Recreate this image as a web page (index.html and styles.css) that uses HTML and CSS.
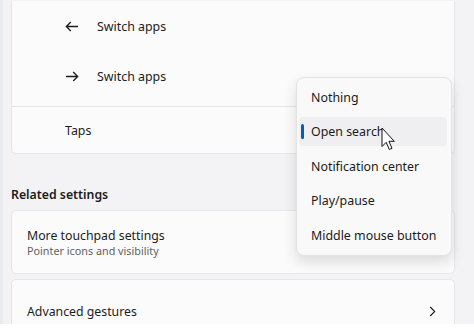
FILE: index.html
```html
<!DOCTYPE html>
<html lang="en">
<head>
    <meta charset="UTF-8">
    <title>Touchpad - Settings</title>
    <link rel="stylesheet" href="styles.css">
</head>
<body>
    <div class="page">
        <div class="card card-top">
            <div class="sub-row">
                <svg class="arrow" width="14" height="11" viewBox="0 0 14 11"><path d="M13 5.5H1.5M5.8 1L1.3 5.5L5.8 10" fill="none" stroke="#1b1b1b" stroke-width="1.3"/></svg>
                <span>Switch apps</span>
            </div>
            <div class="sub-row">
                <svg class="arrow" width="14" height="11" viewBox="0 0 14 11"><path d="M1 5.5H12.5M8.2 1L12.7 5.5L8.2 10" fill="none" stroke="#1b1b1b" stroke-width="1.3"/></svg>
                <span>Switch apps</span>
            </div>
            <div class="taps-row">Taps</div>
        </div>

        <h2 class="section-title">Related settings</h2>

        <div class="card link-card">
            <div class="link-text">
                <div class="link-title">More touchpad settings</div>
                <div class="link-sub">Pointer icons and visibility</div>
            </div>
        </div>

        <div class="card link-card">
            <div class="link-title">Advanced gestures</div>
            <svg class="chevron" width="7" height="11" viewBox="0 0 7 11"><path d="M1.2 1L5.7 5.5L1.2 10" fill="none" stroke="#1b1b1b" stroke-width="1.1"/></svg>
        </div>

        <div class="flyout">
            <div class="option">Nothing</div>
            <div class="option selected">Open search</div>
            <div class="option">Notification center</div>
            <div class="option">Play/pause</div>
            <div class="option">Middle mouse button</div>
        </div>

        <svg class="cursor" width="14" height="24" viewBox="0 0 14 24"><path d="M1 1V19.5L5.2 15.3L8.3 22.5L11 21.3L7.9 14.3H13.3Z" fill="#fff" stroke="#111" stroke-width="1" stroke-linejoin="round"/></svg>
    </div>
    <div class="bottom-strip"></div>
</body>
</html>
```

FILE: styles.css
```css
:root {
    --page-bg: #f3f3f5;
    --card-bg: #fbfbfb;
    --card-border: #e6e6e8;
    --text: #1b1b1b;
    --text-secondary: #626262;
    --accent: #005fb8;
}

body {
    margin: 0;
    background: #fff;
    font-family: 'Noto Sans', 'Open Sans', sans-serif;
    color: var(--text);
}

.page {
    position: relative;
    height: 324px;
    padding: 0 19px 0 11px;
    background: var(--page-bg);
    border-left: 3px solid #ebecef;
    overflow: hidden;
    box-sizing: border-box;
}

.card {
    background: var(--card-bg);
    border: 1px solid var(--card-border);
    border-radius: 5px;
    margin-left: -3px;
}

.card-top {
    border-top: none;
    border-radius: 0 0 5px 5px;
}

.sub-row {
    height: 50px;
    display: flex;
    align-items: center;
    padding-left: 53px;
    font-size: 12.4px;
}

.sub-row:first-child {
    margin-top: 1px;
}

.sub-row:nth-child(2) {
    margin-bottom: 5px;
}

.arrow {
    margin-right: 18px;
}

.taps-row {
    height: 46px;
    display: flex;
    align-items: center;
    padding-left: 53px;
    border-top: 1px solid #e5e5e5;
    font-size: 12.4px;
}

.section-title {
    margin: 31px 0 5px -3px;
    font-size: 12.3px;
    font-weight: 600;
    line-height: 20px;
}

.link-card {
    height: 62px;
    display: flex;
    align-items: center;
    justify-content: space-between;
    padding: 0 18px 0 15px;
    margin-bottom: 5px;
}

.link-title {
    font-size: 12.3px;
    line-height: 17px;
}

.link-sub {
    font-size: 10.8px;
    line-height: 14px;
    color: var(--text-secondary);
}

.flyout {
    position: absolute;
    left: 293px;
    top: 77px;
    width: 156px;
    height: 179px;
    box-sizing: border-box;
    padding: 4.5px 4px 5.5px 2px;
    display: flex;
    flex-direction: column;
    gap: 5.5px;
    background: #f9f9f9;
    border: 1px solid #e3e3e3;
    border-radius: 8px;
    box-shadow: 0 6px 14px rgba(0, 0, 0, 0.13);
}

.option {
    position: relative;
    height: 29px;
    display: flex;
    align-items: center;
    padding-left: 12px;
    border-radius: 4px;
    font-size: 12.4px;
}

.option.selected {
    background: #efeff1;
}

.option.selected::before {
    content: "";
    position: absolute;
    left: 2px;
    top: 7px;
    width: 3px;
    height: 15px;
    border-radius: 2px;
    background: var(--accent);
}

.cursor {
    position: absolute;
    left: 378px;
    top: 127px;
}

.bottom-strip {
    height: 5px;
    background: #fff;
}
```
